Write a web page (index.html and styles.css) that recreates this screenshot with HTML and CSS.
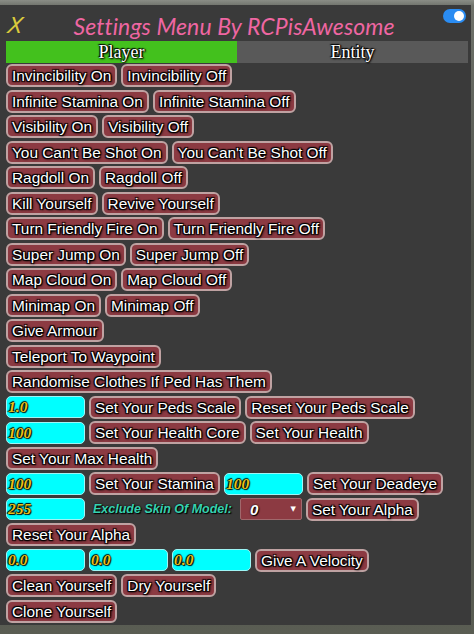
FILE: index.html
```html
<!DOCTYPE html>
<html>
<head>
<meta charset="utf-8">
<link rel="stylesheet" href="styles.css">
</head>
<body>
<div class="panel">
  <div class="header">
    <span class="close">X</span>
    <span class="title">Settings Menu By RCPisAwesome</span>
    <span class="toggle"><span class="knob"></span></span>
  </div>
  <div class="tabs">
    <div class="tab active">Player</div>
    <div class="tab">Entity</div>
  </div>
  <div class="list">
    <div class="row"><button class="btn">Invincibility On</button><button class="btn">Invincibility Off</button></div>
    <div class="row"><button class="btn">Infinite Stamina On</button><button class="btn">Infinite Stamina Off</button></div>
    <div class="row"><button class="btn">Visibility On</button><button class="btn">Visibility Off</button></div>
    <div class="row"><button class="btn">You Can't Be Shot On</button><button class="btn">You Can't Be Shot Off</button></div>
    <div class="row"><button class="btn">Ragdoll On</button><button class="btn">Ragdoll Off</button></div>
    <div class="row"><button class="btn">Kill Yourself</button><button class="btn">Revive Yourself</button></div>
    <div class="row"><button class="btn">Turn Friendly Fire On</button><button class="btn">Turn Friendly Fire Off</button></div>
    <div class="row"><button class="btn">Super Jump On</button><button class="btn">Super Jump Off</button></div>
    <div class="row"><button class="btn">Map Cloud On</button><button class="btn">Map Cloud Off</button></div>
    <div class="row"><button class="btn">Minimap On</button><button class="btn">Minimap Off</button></div>
    <div class="row"><button class="btn">Give Armour</button></div>
    <div class="row"><button class="btn">Teleport To Waypoint</button></div>
    <div class="row"><button class="btn">Randomise Clothes If Ped Has Them</button></div>
    <div class="row"><span class="inp">1.0</span><button class="btn">Set Your Peds Scale</button><button class="btn">Reset Your Peds Scale</button></div>
    <div class="row"><span class="inp">100</span><button class="btn">Set Your Health Core</button><button class="btn">Set Your Health</button></div>
    <div class="row"><button class="btn">Set Your Max Health</button></div>
    <div class="row"><span class="inp">100</span><button class="btn">Set Your Stamina</button><span class="inp">100</span><button class="btn">Set Your Deadeye</button></div>
    <div class="row"><span class="inp">255</span><span class="label">Exclude Skin Of Model:</span><span class="select"><span class="val">0</span><span class="arrow">▼</span></span><button class="btn">Set Your Alpha</button></div>
    <div class="row"><button class="btn">Reset Your Alpha</button></div>
    <div class="row"><span class="inp">0.0</span><span class="inp">0.0</span><span class="inp">0.0</span><button class="btn">Give A Velocity</button></div>
    <div class="row"><button class="btn">Clean Yourself</button><button class="btn">Dry Yourself</button></div>
    <div class="row"><button class="btn">Clone Yourself</button></div>
  </div>
</div>
</body>
</html>
```
FILE: styles.css
```css
html, body {
  margin: 0;
  padding: 0;
}
body {
  width: 474px;
  height: 634px;
  overflow: hidden;
  background: linear-gradient(180deg, #8a8d86 0px, #6f726b 6px, #4c4f48 40%, #5a5d53 100%);
}
.panel {
  margin-top: 5px;
  width: 471px;
  height: 620px;
  background: #3a3a3a;
  box-sizing: border-box;
  padding: 0 3px 0 6px;
}
.header {
  height: 36px;
  display: flex;
  align-items: center;
  justify-content: center;
  position: relative;
}
.close {
  position: absolute;
  left: 2px;
  top: 9px;
  color: #d9c93c;
  font-family: "DejaVu Sans", sans-serif;
  font-style: italic;
  font-size: 22px;
  line-height: 24px;
  transform: skewX(-8deg);
}
.title {
  color: #ef66a2;
  font-family: "Lato", sans-serif;
  font-style: italic;
  font-size: 23px;
  line-height: 28px;
  margin-top: 6px;
  margin-left: -6px;
  letter-spacing: 0.1px;
}
.toggle {
  position: absolute;
  right: 2px;
  top: 4px;
  width: 23px;
  height: 14px;
  border-radius: 7px;
  background: #2a8cf2;
}
.knob {
  position: absolute;
  right: 2px;
  top: 2px;
  width: 10px;
  height: 10px;
  border-radius: 50%;
  background: #ffffff;
}
.tabs {
  display: flex;
  height: 22px;
}
.tab {
  flex: 1;
  background: #595959;
  color: #ffffff;
  font-family: "Liberation Serif", serif;
  font-size: 18px;
  line-height: 22px;
  text-align: center;
  text-shadow: 0 0 2px #000, 1px 1px 2px #000, -1px -1px 1px #000, 1px 0 1px #000;
}
.tab.active {
  background: #43c11d;
}
.list {
  display: flex;
  flex-direction: column;
  gap: 2.5px;
  margin-top: 1px;
}
.row {
  display: flex;
  align-items: center;
  gap: 4px;
  height: 23px;
}
.btn {
  height: 23px;
  box-sizing: border-box;
  padding: 0 4px;
  background: #8c3a42;
  border: 2px solid #bfa2a2;
  border-radius: 6px;
  color: #ffffff;
  font-family: "Liberation Sans", Arial, sans-serif;
  font-size: 15.4px;
  line-height: 19px;
  white-space: nowrap;
  text-shadow: 0 0 1px #000, 1px 1px 1px #000, -1px -1px 1px #000, 1px -1px 1px #000, -1px 1px 1px #000, 1px 1px 3px #000;
}
.inp {
  width: 79px;
  height: 22px;
  box-sizing: border-box;
  background: #00ffff;
  border: 1px solid #9ef5f5;
  border-radius: 5px;
  padding-left: 1px;
  color: #e8c21a;
  font-family: "Liberation Serif", serif;
  font-style: italic;
  font-weight: bold;
  font-size: 15.5px;
  line-height: 20px;
  text-shadow: 0 0 1px #000, 1px 1px 1px #000, -1px 0 1px #000, 0 -1px 1px #000;
}
.label {
  color: #36d2b0;
  font-family: "Liberation Sans", Arial, sans-serif;
  font-style: italic;
  font-weight: bold;
  font-size: 12.5px;
  margin-left: 4px;
  margin-right: 4px;
  text-shadow: 0 0 2px #000, 1px 1px 1px #000;
}
.select {
  width: 62px;
  height: 22px;
  box-sizing: border-box;
  background: #8c3a42;
  border: 1px solid #a0686c;
  border-radius: 2px;
  display: flex;
  align-items: center;
  justify-content: space-between;
  padding: 0 5px 0 9px;
}
.val {
  color: #ffffff;
  font-family: "Liberation Sans", Arial, sans-serif;
  font-style: italic;
  font-weight: bold;
  font-size: 15px;
  text-shadow: 0 0 2px #000, 1px 1px 1px #000;
}
.arrow {
  color: #ffffff;
  font-size: 7px;
  font-family: "DejaVu Sans", sans-serif;
}
```
